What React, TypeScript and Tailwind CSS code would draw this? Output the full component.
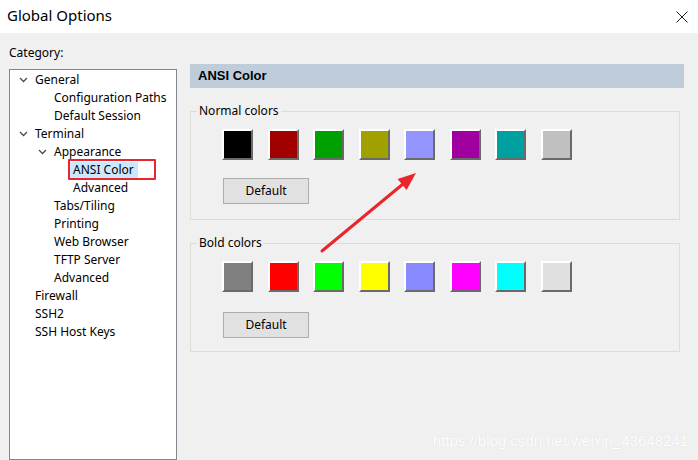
import React from 'react';

type TreeItem = {
  label: string;
  level: 0 | 1 | 2;
  expanded?: boolean;
  selected?: boolean;
};

const treeItems: TreeItem[] = [
  { label: 'General', level: 0, expanded: true },
  { label: 'Configuration Paths', level: 1 },
  { label: 'Default Session', level: 1 },
  { label: 'Terminal', level: 0, expanded: true },
  { label: 'Appearance', level: 1, expanded: true },
  { label: 'ANSI Color', level: 2, selected: true },
  { label: 'Advanced', level: 2 },
  { label: 'Tabs/Tiling', level: 1 },
  { label: 'Printing', level: 1 },
  { label: 'Web Browser', level: 1 },
  { label: 'TFTP Server', level: 1 },
  { label: 'Advanced', level: 1 },
  { label: 'Firewall', level: 0 },
  { label: 'SSH2', level: 0 },
  { label: 'SSH Host Keys', level: 0 },
];

const indent = ['pl-[8px]', 'pl-[27px]', 'pl-[46px]'];

const normalColors = ['#000000', '#a00000', '#00a000', '#a0a000', '#9494ff', '#a000a0', '#00a0a0', '#c0c0c0'];
const boldColors = ['#808080', '#ff0000', '#00ff00', '#ffff00', '#8888ff', '#ff00ff', '#00ffff', '#e0e0e0'];

function Chevron() {
  return (
    <svg width="9" height="6" viewBox="0 0 9 6" className="ml-[1px]">
      <polyline points="1,1 4.5,4.5 8,1" fill="none" stroke="#4a4a4a" strokeWidth="1.3" />
    </svg>
  );
}

function TreeRow({ item }: { item: TreeItem }) {
  return (
    <div className={`flex h-[18px] items-center ${indent[item.level]}`}>
      <div className="flex w-[17px] shrink-0 items-center">{item.expanded && <Chevron />}</div>
      {item.selected ? (
        <span className="-ml-[4px] h-[16px] bg-[#cce8ff] px-[4px] leading-[16px]">{item.label}</span>
      ) : (
        <span className="leading-[16px]">{item.label}</span>
      )}
    </div>
  );
}

function ColorGroup({
  title,
  colors,
  buttonGap,
  bottomPad,
}: {
  title: string;
  colors: string[];
  buttonGap: string;
  bottomPad: string;
}) {
  return (
    <fieldset className={`w-[490px] border border-[#dcdcdc] p-0 ${bottomPad}`}>
      <legend className="ml-[6px] px-[2px] text-[12px] leading-[14px]">{title}</legend>
      <div className="mt-[11px] flex gap-[14.5px] pl-[31px]">
        {colors.map((c, i) => (
          <div
            key={i}
            className="h-[31px] w-[31px] border-2 border-t-white border-l-white border-b-[#6a6a6a] border-r-[#6a6a6a]"
            style={{ backgroundColor: c }}
          />
        ))}
      </div>
      <div className={`pl-[32px] ${buttonGap}`}>
        <button className="flex h-[26px] w-[86px] items-center justify-center border border-[#adadad] bg-[#e1e1e1] text-[12px]">
          Default
        </button>
      </div>
    </fieldset>
  );
}

export default function App() {
  return (
    <div className="relative flex h-[460px] w-[698px] flex-col overflow-hidden font-['Noto_Sans',sans-serif] text-[12px] text-black">
      {/* Window title */}
      <div className="flex h-[33px] shrink-0 items-center justify-between bg-white pb-[3px] pl-[7px] pr-[10px]">
        <span className="text-[15px] leading-[20px]">Global Options</span>
        <svg width="12" height="12" viewBox="0 0 12 12" className="mt-[3px]">
          <path d="M0.5 0.5 L11.5 11.5 M11.5 0.5 L0.5 11.5" stroke="#222" strokeWidth="1" />
        </svg>
      </div>

      <div className="flex flex-1 bg-[#f0f0f0]">
        {/* Category tree */}
        <div className="flex w-[177px] shrink-0 flex-col pl-[9px] pt-[13px]">
          <div className="h-[14px] leading-[14px]">Category:</div>
          <div className="mt-[9px] flex-1 border border-[#828790] bg-white pt-[1px]">
            {treeItems.map((item, i) => (
              <TreeRow key={i} item={item} />
            ))}
          </div>
        </div>

        {/* Settings page */}
        <div className="ml-[13px] flex w-[494px] flex-col pt-[31px]">
          <div className="flex h-[24px] items-center bg-[#bfcddb] pl-[8px] font-['Liberation_Sans',sans-serif] text-[13px] font-bold">
            ANSI Color
          </div>
          <div className="mt-[16px]">
            <ColorGroup title="Normal colors" colors={normalColors} buttonGap="mt-[18px]" bottomPad="pb-[15px]" />
          </div>
          <div className="mt-[16px]">
            <ColorGroup title="Bold colors" colors={boldColors} buttonGap="mt-[20px]" bottomPad="pb-[13px]" />
          </div>
        </div>
      </div>

      {/* Annotations */}
      <div className="absolute left-[68px] top-[159px] h-[21px] w-[88px] rounded-[1px] border-2 border-[#e8262b]" />
      <svg className="pointer-events-none absolute left-0 top-0" width="698" height="460">
        <line x1="322" y1="251" x2="403" y2="184" stroke="#e8262b" strokeWidth="3" strokeLinecap="round" />
        <polygon points="416,173 397.6,179.1 406.6,189.9" fill="#e8262b" />
      </svg>
      <div className="absolute bottom-[10px] right-[10px] font-['Liberation_Sans',sans-serif] text-[15px] leading-[18px] text-white [text-shadow:0_0_1px_#d4d4d4]">
        https://blog.csdn.net/weixin_43648241
      </div>
    </div>
  );
}
